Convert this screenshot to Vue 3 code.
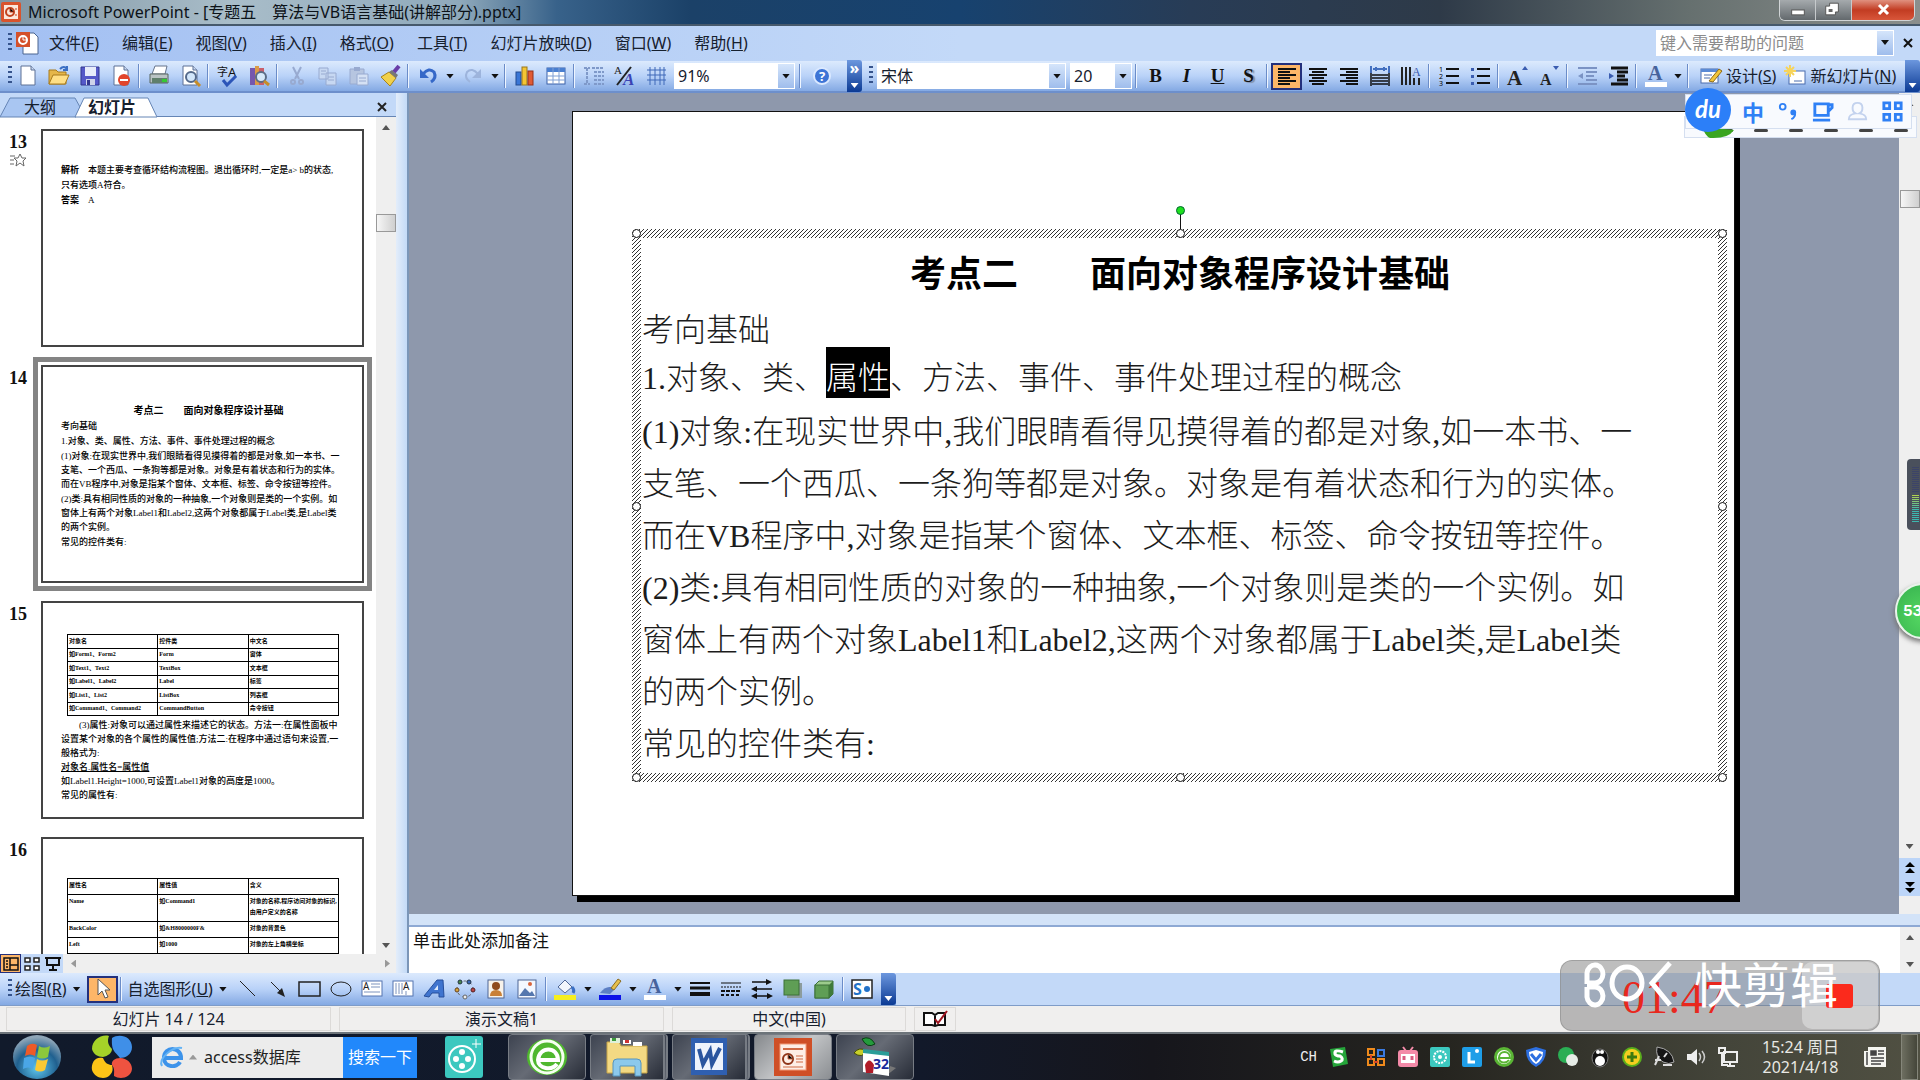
<template>
  <div class="app">
    <header class="titlebar">
      <svg class="app-icon" viewBox="0 0 22 22" v-html="icons.ppt"></svg>
      <h1>Microsoft PowerPoint - [专题五　算法与VB语言基础(讲解部分).pptx]</h1>
      <div class="window-buttons">
        <button aria-label="最小化"><svg viewBox="0 0 36 20"><rect x="12" y="10" width="13" height="5" fill="#fff" stroke="#555" /></svg></button>
        <button aria-label="还原"><svg viewBox="0 0 36 20"><path d="M14 3h9v9h-3v3h-10v-9h4z" fill="#fff" stroke="#555" /><path d="M13 9h4v3h-4z" fill="#666" /></svg></button>
        <button class="close" aria-label="关闭"><svg viewBox="0 0 62 20"><path d="M27 5l9 9M36 5l-9 9" stroke="#fff" stroke-width="3" /></svg></button>
      </div>
    </header>

    <nav class="menubar">
      <i class="grip"></i>
      <svg class="doc-icon" viewBox="0 0 24 24"><path d="M8 2h11l4 4v17H8z" fill="#fff" stroke="#4a6590" /><rect x="1" y="1" width="14" height="15" fill="#d4502a" /><circle cx="8" cy="9" r="4" fill="none" stroke="#fff" stroke-width="2" /><path d="M8 5v4h4" stroke="#fff" fill="none" /></svg>
      <button v-for="m in menus" :key="m.key" class="menu-item">{{ m.label }}(<u>{{ m.key }}</u>)</button>
      <label class="ask">
        <input type="text" placeholder="键入需要帮助的问题" aria-label="键入需要帮助的问题" />
        <span class="drop"><i class="caret"></i></span>
      </label>
      <button class="doc-close" aria-label="关闭窗口"><svg viewBox="0 0 12 12"><path d="M2 2l8 8M10 2l-8 8" stroke="#111" stroke-width="2" /></svg></button>
    </nav>

    <div class="toolbars">
      <i class="grip"></i>
      <template v-for="(t, i) in standardTools" :key="'s' + i">
        <i v-if="t === '|'" class="sep"></i>
        <button v-else-if="t === 'v'" class="arrow" aria-label="更多"><i class="caret"></i></button>
        <button v-else class="tool" :aria-label="t"><svg viewBox="0 0 22 22" v-html="icons[t]"></svg></button>
      </template>
      <label class="combo zoom-box">
        <select aria-label="显示比例"><option>91%</option></select>
        <span class="drop"><i class="caret"></i></span>
      </label>
      <i class="sep"></i>
      <button class="tool help" aria-label="帮助"><svg viewBox="0 0 22 22"><circle cx="11" cy="11" r="8" fill="#3d74d6" stroke="#dbe9ff" stroke-width="2" /><text x="11" y="16" text-anchor="middle" font-size="13" font-weight="bold" fill="#fff">?</text></svg></button>
      <span class="overflow"><b>»</b><i class="caret"></i></span>
      <i class="grip second"></i>
      <label class="combo font-box">
        <select aria-label="字体"><option>宋体</option></select>
        <span class="drop"><i class="caret"></i></span>
      </label>
      <label class="combo size-box">
        <select aria-label="字号"><option>20</option></select>
        <span class="drop"><i class="caret"></i></span>
      </label>
      <i class="sep"></i>
      <button class="tool letter">B</button>
      <button class="tool letter"><em>I</em></button>
      <button class="tool letter"><u>U</u></button>
      <button class="tool letter shadowed">S</button>
      <template v-for="(t, i) in formatTools" :key="'f' + i">
        <i v-if="t === '|'" class="sep"></i>
        <button v-else-if="t === 'v'" class="arrow" aria-label="更多"><i class="caret"></i></button>
        <button v-else class="tool" :class="{ active: t === 'left' }" :aria-label="t"><svg viewBox="0 0 22 22" v-html="icons[t]"></svg></button>
      </template>
      <button class="text-tool"><svg viewBox="0 0 22 22" v-html="icons.design"></svg>设计(<u>S</u>)</button>
      <button class="text-tool"><svg viewBox="0 0 22 22" v-html="icons.newSlide"></svg>新幻灯片(<u>N</u>)</button>
      <span class="overflow last"><i class="caret"></i></span>
    </div>

    <main class="workspace">
      <aside class="outline">
        <div class="tabs">
          <svg class="tab-shape" viewBox="0 0 396 20" preserveAspectRatio="none">
            <path d="M0 20L10 1H75L80 10L76 20z" fill="#a9c6f2" stroke="#6585b5" />
            <path d="M75 20L84 1H148L157 20z" fill="#fff" stroke="#6585b5" />
            <path d="M157 19.500H396" stroke="#6585b5" />
          </svg>
          <button class="tab">大纲</button>
          <button class="tab current">幻灯片</button>
          <button class="tab-close" aria-label="关闭"><svg viewBox="0 0 12 12"><path d="M2 2l8 8M10 2l-8 8" stroke="#222" stroke-width="2" /></svg></button>
        </div>
        <div class="thumb-area">
          <ol class="thumbs">
            <li>
              <div class="no">13<svg viewBox="0 0 18 14"><path d="M1 3h5M1 7h4M1 11h4M11 1l2 4h4l-3 3 1 5-4-3-4 3 1-5-3-3h4z" fill="none" stroke="#666" /></svg></div>
              <div class="thumb t13">
                <p><b>解析</b>　本题主要考查循环结构流程图。退出循环时,一定是a&gt; b的状态,</p>
                <p>只有选项A符合。</p>
                <p><b>答案</b>　A</p>
              </div>
            </li>
            <li>
              <div class="no">14</div>
              <div class="thumb t14 selected">
                <h3>{{ slide.title }}</h3>
                <p v-for="(para, i) in slide.paragraphs" :key="i"><span v-for="line in para" :key="line" class="line">{{ line }}</span></p>
              </div>
            </li>
            <li>
              <div class="no">15</div>
              <div class="thumb t15">
                <table>
                  <tr v-for="row in controlTable" :key="row[0]"><td v-for="c in row" :key="c">{{ c }}</td></tr>
                </table>
                <p class="indent">(3)属性:对象可以通过属性来描述它的状态。方法一:在属性面板中</p>
                <p>设置某个对象的各个属性的属性值;方法二:在程序中通过语句来设置,一</p>
                <p>般格式为:</p>
                <p><u>对象名.属性名=属性值</u></p>
                <p>如Label1.Height=1000,可设置Label1对象的高度是1000。</p>
                <p>常见的属性有:</p>
              </div>
            </li>
            <li>
              <div class="no">16</div>
              <div class="thumb t16">
                <table>
                  <tr v-for="row in propTable" :key="row[0]"><td v-for="c in row" :key="c">{{ c }}</td></tr>
                </table>
              </div>
            </li>
          </ol>
          <div class="vscroll">
            <i class="caret up"></i>
            <i class="knob"></i>
            <i class="caret"></i>
          </div>
        </div>
        <div class="views">
          <button class="on" aria-label="普通视图"><svg viewBox="0 0 18 16"><path d="M2 2h14v12H2zM8 2v12M8 9h8M4 5h2M4 8h2M4 11h2" fill="none" stroke="#111" stroke-width="1.500" /></svg></button>
          <button aria-label="浏览视图"><svg viewBox="0 0 18 16"><path d="M2 2h5v4H2zM11 2h5v4h-5zM2 10h5v4H2zM11 10h5v4h-5z" fill="#fff" stroke="#222" stroke-width="1.500" /></svg></button>
          <button aria-label="放映"><svg viewBox="0 0 18 16"><path d="M1 2h16M3 2v7h12V2M9 9v4M5 14h8" fill="none" stroke="#111" stroke-width="2" /></svg></button>
          <div class="hscroll"><i class="caret to-left"></i><i class="caret to-right"></i></div>
        </div>
      </aside>
      <div class="splitter"></div>

      <section class="editor">
        <div class="stage-row">
          <div class="stage">
            <article class="slide">
              <div class="frame">
                <i v-for="h in handles" :key="h" class="handle" :class="h"></i>
                <i class="stem"></i><i class="rotate"></i>
                <div class="frame-body">
                  <h2>{{ slide.title }}</h2>
                  <p class="topic">考向基础</p>
                  <p class="topic lead">1.对象、类、<mark>属性</mark>、方法、事件、事件处理过程的概念</p>
                  <p v-for="(para, i) in slide.paragraphs.slice(2)" :key="i"><span v-for="line in para" :key="line" class="line">{{ line }}</span></p>
                </div>
              </div>
            </article>
          </div>
          <div class="vscroll main-scroll">
            <i class="caret up"></i>
            <i class="knob"></i>
            <i class="caret"></i>
            <div class="pager">
              <svg viewBox="0 0 10 12"><path d="M5 0l5 5H0zM5 6l5 5H0z" /></svg>
              <svg viewBox="0 0 10 12"><path d="M5 6L0 1h10zM5 12L0 7h10z" /></svg>
            </div>
          </div>
        </div>
        <div class="hsplit"></div>
        <div class="notes-row">
          <textarea aria-label="备注" placeholder="单击此处添加备注"></textarea>
          <div class="vscroll notes-scroll"><i class="caret up"></i><i class="caret"></i></div>
        </div>
      </section>
    </main>

    <div class="drawbar">
      <div class="draw-tools">
        <i class="grip"></i>
        <button class="text-tool">绘图(<u>R</u>)<i class="caret"></i></button>
        <button class="tool active" aria-label="选择"><svg viewBox="0 0 22 22" v-html="icons.cursor"></svg></button>
        <i class="sep"></i>
        <button class="text-tool">自选图形(<u>U</u>)<i class="caret"></i></button>
        <template v-for="(t, i) in drawTools" :key="'d' + i">
          <i v-if="t === '|'" class="sep"></i>
          <button v-else-if="t === 'v'" class="arrow" aria-label="更多"><i class="caret"></i></button>
          <button v-else class="tool" :aria-label="t"><svg viewBox="0 0 22 22" v-html="icons[t]"></svg></button>
        </template>
        <span class="overflow last"><i class="caret"></i></span>
      </div>
    </div>

    <footer class="status">
      <span class="cell wide">幻灯片 14 / 124</span>
      <span class="cell wide">演示文稿1</span>
      <span class="cell lang">中文(中国)</span>
      <span class="cell book"><svg viewBox="0 0 26 18"><path d="M2 3h8l3 2 3-2h7v12h-7l-3 1-3-1H2zM13 5v11" fill="#fff" stroke="#111" stroke-width="2" /><path d="M13 9l3 4 9-12" fill="none" stroke="#a01520" stroke-width="2" /></svg></span>
    </footer>

    <div class="taskbar">
      <button class="orb" aria-label="开始">
        <svg viewBox="0 0 50 46">
          <defs><radialGradient id="orb" cx="50%" cy="75%" r="70%"><stop offset="0" stop-color="#5fc8f0" /><stop offset=".6" stop-color="#20608f" /><stop offset="1" stop-color="#8fa6b8" /></radialGradient></defs>
          <ellipse cx="25" cy="23" rx="24" ry="22" fill="url(#orb)" />
          <path d="M15 12q5-4 10-1l-2 11q-5-3-10 0z" fill="#ee5a28" /><path d="M27 12q5 3 11 0l-2 11q-6 3-11 0z" fill="#8cc83c" />
          <path d="M12 24q6-3 11 0l-2 11q-5-3-10 0z" fill="#4aa6e6" /><path d="M25 25q5 3 11 0l-3 11q-5 3-10 0z" fill="#fbc934" />
        </svg>
      </button>
      <svg class="petals" viewBox="0 0 42 44"><path d="M18 1C10-1 1 5 1 14c1 5 6 8 11 8 5-1 9-4 9-8-4-4-5-8-3-13z" fill="#a5d228" /><path d="M21 3c7-5 20-2 20 9 0 8-7 11-12 11-4-6-9-6-8-20z" fill="#3f8fe8" /><path d="M12 23c-8-2-12 5-11 12 3 9 14 10 18 5 3-3 3-6 2-10-4 0-7-2-9-7z" fill="#fdc417" /><path d="M29 23c7 0 12 5 12 11-1 9-12 11-18 7 0-4 1-7-2-11-1-4 3-7 8-7z" fill="#ee5340" /></svg>
      <form class="search" @submit.prevent>
        <svg viewBox="0 0 24 24"><path d="M4 13h17c0-12-17-12-17 0 0 10 13 10 16 4" fill="none" stroke="#3d93ea" stroke-width="4" /><path d="M2 21C-2 14 12 1 22 3" fill="none" stroke="#63b3f5" stroke-width="2" /></svg>
        <i class="caret up"></i>
        <input type="text" v-model="query" aria-label="搜索" />
        <button>搜索一下</button>
      </form>
      <svg class="film" viewBox="0 0 38 42"><rect width="38" height="42" rx="3" fill="#3cc8bf" /><circle cx="17" cy="23" r="13" fill="none" stroke="#fff" stroke-width="2" /><circle cx="17" cy="16" r="3" fill="#fff" /><circle cx="11" cy="23" r="3" fill="#fff" /><circle cx="23" cy="23" r="3" fill="#fff" /><circle cx="17" cy="30" r="3" fill="#fff" /><path d="M31 3v9M27 8h9" stroke="#fff" /></svg>
      <div class="tasks">
        <button v-for="t in tasks" :key="t.id" class="task" :class="{ on: t.on, stack: t.stack }" :aria-label="t.id"><svg viewBox="0 0 44 40" v-html="t.svg"></svg></button>
      </div>
      <div class="tray">
        <span class="ime">CH</span>
        <svg v-for="(s, i) in tray" :key="i" viewBox="0 0 20 20" v-html="s"></svg>
      </div>
      <time class="clock">15:24 周日<br />2021/4/18</time>
      <svg class="action" viewBox="0 0 24 22"><path d="M5 1h18v20H3q-2 0-2-3V5h4z" fill="#f5f5f0" /><path d="M4 6v13M8 5h5v4H8zM15 5h6M15 8h6M8 12h13M8 15h13M8 18h10" stroke="#444" fill="#444" stroke-width="1.500" /></svg>
      <i class="show-desktop"></i>
    </div>

    <!-- floating tools over the window -->
    <div class="ime-under"><i></i><i></i><i></i><i></i><i></i><i></i></div>
    <svg class="ime-leaf" viewBox="0 0 32 12"><path d="M0 0q3 10 8 12q18 1 24-8L10 2z" fill="#3aa520" /></svg>
    <div class="ime-bar">
      <b>du</b>
      <span>中</span>
      <svg viewBox="0 0 24 24"><circle cx="7" cy="7" r="3" fill="none" stroke="#2f80f5" stroke-width="2" /><circle cx="18" cy="13" r="3" fill="#2f80f5" /><path d="M20 14q0 4-4 6" stroke="#2f80f5" stroke-width="2" fill="none" /></svg>
      <svg viewBox="0 0 24 24"><path d="M4 4h14v12H4zM18 5h4v3l-4 4M2 21h18" fill="none" stroke="#2f80f5" stroke-width="3" /></svg>
      <svg viewBox="0 0 24 24"><path d="M12 3c-7 0-6 9-2 11-6 1-7 3-7 6h18c0-3-1-5-7-6 4-2 5-11-2-11z" fill="none" stroke="#c3d2ee" stroke-width="2" /></svg>
      <svg viewBox="0 0 24 24"><path d="M3 3h6v6H3zM15 3h6v6h-6zM3 15h6v6H3zM15 15h6v6h-6z" fill="none" stroke="#2f80f5" stroke-width="3" /></svg>
    </div>
    <div class="meter"><i></i></div>
    <div class="ball">53</div>
    <div class="recorder">
      <span class="timer">01:47</span>
      <span class="stop"><i></i></span>
      <div class="brand">
        <svg viewBox="0 0 90 48"><path d="M3 23V12a8 9 0 1 1 8 10H3M3 26v10a8 9 0 1 0 8-10H3" fill="none" stroke="#fff" stroke-width="5" /><ellipse cx="43" cy="22" rx="15" ry="16" fill="none" stroke="#fff" stroke-width="5" /><path d="M86 2L68 22l18 22" fill="none" stroke="#fff" stroke-width="5" /></svg>
        <span>快剪辑</span>
      </div>
    </div>
  </div>
</template>

<script setup>
import { ref } from 'vue'

const query = ref('access数据库')

const menus = [
  { label: '文件', key: 'F' },
  { label: '编辑', key: 'E' },
  { label: '视图', key: 'V' },
  { label: '插入', key: 'I' },
  { label: '格式', key: 'O' },
  { label: '工具', key: 'T' },
  { label: '幻灯片放映', key: 'D' },
  { label: '窗口', key: 'W' },
  { label: '帮助', key: 'H' }
]

const standardTools = [
  'new', 'open', 'save', 'perm', '|', 'print', 'preview', '|', 'spell', 'research', '|',
  'cut', 'copy', 'paste', 'brush', '|', 'undo', 'v', 'redo', 'v', '|', 'chart', 'table', '|',
  'expand', 'colorText', 'grid'
]
const formatTools = [
  '|', 'left', 'center', 'right', 'spread', 'vertical', '|', 'numbers', 'bullets', '|',
  'grow', 'shrink', '|', 'outdent', 'indent', '|', 'fontColor', 'v', '|'
]
const drawTools = [
  'line', 'lineArrow', 'rect', 'oval', 'textbox', 'vtextbox', 'wordart', 'diagram', 'clip', 'picture', '|',
  'fill', 'v', 'pen', 'v', 'fontColor', 'v', 'weight', 'dash', 'arrows', 'shadow', 'cube', '|', 'sogou'
]

const handles = ['tl', 'tc', 'tr', 'ml', 'mr', 'bl', 'bc', 'br']

const slide = {
  title: '考点二　　面向对象程序设计基础',
  paragraphs: [
    ['考向基础'],
    ['1.对象、类、属性、方法、事件、事件处理过程的概念'],
    [
      '(1)对象:在现实世界中,我们眼睛看得见摸得着的都是对象,如一本书、一',
      '支笔、一个西瓜、一条狗等都是对象。对象是有着状态和行为的实体。',
      '而在VB程序中,对象是指某个窗体、文本框、标签、命令按钮等控件。'
    ],
    [
      '(2)类:具有相同性质的对象的一种抽象,一个对象则是类的一个实例。如',
      '窗体上有两个对象Label1和Label2,这两个对象都属于Label类,是Label类',
      '的两个实例。'
    ],
    ['常见的控件类有:']
  ]
}

const controlTable = [
  ['对象名', '控件类', '中文名'],
  ['如Form1、Form2', 'Form', '窗体'],
  ['如Text1、Text2', 'TextBox', '文本框'],
  ['如Label1、Label2', 'Label', '标签'],
  ['如List1、List2', 'ListBox', '列表框'],
  ['如Command1、Command2', 'CommandButton', '命令按钮']
]
const propTable = [
  ['属性名', '属性值', '含义'],
  ['Name', '如Command1', '对象的名称,程序访问对象的标识,由用户定义的名称'],
  ['BackColor', '如&H8000000F&', '对象的背景色'],
  ['Left', '如1000', '对象的左上角横坐标'],
  ['Top', '如1000', '对象的左上角纵坐标']
]

const bars = (rows, color = '#111') =>
  rows.map(([x, w], i) => `<rect x="${x}" y="${3 + i * 3}" width="${w}" height="2" fill="${color}"/>`).join('')

const page = '<path d="M4 1h10l4 4v15H4z" fill="#fff" stroke="#5c7196"/><path d="M14 1v4h4" fill="#c9d8f0" stroke="#5c7196"/>'
const sheets = (c) => `<path d="M2 3h9v11H2zM9 8h10v12H9z" fill="#c7d8f2" stroke="${c}"/><path d="M4 6h5M4 9h4M11 12h6M11 15h6" stroke="${c}"/>`

const icons = {
  ppt: '<rect x="1" y="1" width="20" height="20" rx="2" fill="#d9532c"/><rect x="4" y="4" width="14" height="14" fill="#fbe7dc"/><circle cx="10" cy="11" r="4" fill="none" stroke="#c3431e" stroke-width="2"/><path d="M10 7v4h4M15 8h2M15 14h2" stroke="#c3431e"/>',
  new: page,
  open: '<path d="M1 5h7l2 2h8v12H1z" fill="#e5b64a" stroke="#a87b1c"/><path d="M5 10h16l-4 9H1z" fill="#ffdf86" stroke="#a87b1c"/><path d="M12 4q4-4 7 0M19 1v4h-4" fill="none" stroke="#3a6fc4" stroke-width="2"/>',
  save: '<path d="M2 2h18v18H2z" fill="#5559c8" stroke="#33378e"/><rect x="6" y="2" width="11" height="9" fill="#e7ecfa"/><rect x="7" y="14" width="9" height="6" fill="#cfd4ea"/><rect x="8" y="15" width="3" height="5" fill="#33378e"/>',
  perm: page + '<circle cx="14" cy="15" r="6" fill="#e2452b"/><path d="M10 15h8" stroke="#fff" stroke-width="2"/>',
  print: '<path d="M7 1h12l-2 8H4z" fill="#fff" stroke="#66748c"/><path d="M2 9h18v9H2z" fill="#b9c3c4" stroke="#56645f"/><path d="M4 13h15v5H4z" fill="#5f7f6c"/><rect x="14" y="14" width="5" height="3" fill="#35c934"/>',
  preview: page + '<circle cx="12" cy="12" r="5" fill="#d2e6fa" stroke="#54698a" stroke-width="2"/><path d="M16 16l5 5" stroke="#c78d28" stroke-width="3"/>',
  spell: '<text x="0" y="11" font-size="11" fill="#111">字</text><text x="11" y="12" font-size="13" fill="#111">A</text><path d="M6 15l4 5 9-9" fill="none" stroke="#2c55b8" stroke-width="3"/>',
  research: '<rect x="2" y="3" width="5" height="17" fill="#7657ad"/><rect x="7" y="1" width="4" height="19" fill="#db9b48"/><rect x="11" y="3" width="5" height="17" fill="#c95f6b"/><circle cx="13" cy="12" r="5" fill="#d6e8f8" stroke="#5b6c86" stroke-width="2"/><path d="M16 16l5 4" stroke="#c78d28" stroke-width="3"/>',
  cut: '<path d="M7 2l6 12M15 2L9 14" stroke="#98aad0" stroke-width="2"/><circle cx="7" cy="17" r="2" fill="none" stroke="#98aad0" stroke-width="2"/><circle cx="15" cy="17" r="2" fill="none" stroke="#98aad0" stroke-width="2"/>',
  copy: sheets('#98aad0'),
  paste: '<path d="M2 4h14v15H2z" fill="#b6c5e0" stroke="#98aad0"/><path d="M6 2h6v4H6z" fill="#98aad0"/><path d="M9 9h11v11H9z" fill="#d5e1f4" stroke="#98aad0"/><path d="M11 13h7M11 16h7" stroke="#98aad0"/>',
  brush: '<path d="M2 12l8-5 7 6-6 8z" fill="#f1d14b" stroke="#a7831b"/><path d="M10 7l3-2 6 5-2 3z" fill="#777"/><path d="M15 7l5-6" stroke="#6a3da8" stroke-width="4"/>',
  undo: '<path d="M6 9q6-7 11-2 3 6-3 10" fill="none" stroke="#3568c8" stroke-width="3"/><path d="M3 4v9h9z" fill="#3568c8"/>',
  redo: '<path d="M16 9q-6-7-11-2-3 6 3 10" fill="none" stroke="#9db4dc" stroke-width="2"/><path d="M19 4v9h-9z" fill="#9db4dc"/>',
  chart: '<rect x="2" y="7" width="5" height="13" fill="#3a76d6" stroke="#234b90"/><rect x="8" y="2" width="5" height="18" fill="#f4c534" stroke="#98761a"/><rect x="14" y="6" width="5" height="14" fill="#e05a34" stroke="#963018"/>',
  table: '<rect x="2" y="3" width="18" height="16" fill="#fff" stroke="#3b61a8"/><rect x="2" y="3" width="18" height="4" fill="#4a7fd0"/><path d="M2 11h18M2 15h18M8 3v16M14 3v16" stroke="#7f9fd4"/>',
  expand: '<path d="M1 3h6M4 3v16M1 19h6M9 3h12M11 7h10M11 11h10M11 15h10M11 19h10" stroke="#7f99c9" stroke-width="2" stroke-dasharray="3 1" fill="none"/>',
  colorText: '<text x="0" y="9" font-size="11" font-family="Liberation Serif" fill="#222">A</text><path d="M3 20L17 2" stroke="#222" stroke-width="2"/><text x="9" y="20" font-size="17" font-style="italic" font-weight="bold" font-family="Liberation Serif" fill="#3a43b4">A</text>',
  grid: '<path d="M2 5h19M2 10h19M2 15h19M5 2v18M10 2v18M15 2v18M19 2v18" stroke="#3f68b8"/>',
  left: bars([[2, 18], [2, 12], [2, 18], [2, 12], [2, 18], [2, 12]]),
  center: bars([[2, 18], [5, 12], [2, 18], [5, 12], [2, 18], [5, 12]]),
  right: bars([[2, 18], [8, 12], [2, 18], [8, 12], [2, 18], [8, 12]]),
  spread: '<path d="M2 1v7M20 1v7M4 4h14M7 2v4M15 2v4" stroke="#4470c0" stroke-width="2" fill="none"/><path d="M3 10h16M3 13h16M3 16h16M3 19h16M2 8v13M20 8v13" stroke="#111" stroke-width="1.500"/>',
  vertical: '<path d="M2 2v18M6 2v18M10 2v18M14 13v7M19 13v7" stroke="#222" stroke-width="2"/><text x="12" y="11" font-size="12" fill="#3a5cb0" font-family="Liberation Serif">A</text>',
  numbers: '<path d="M8 4h13M8 11h13M8 18h13" stroke="#111" stroke-width="2"/><text x="1" y="7" font-size="7">1</text><text x="1" y="14" font-size="7">2</text><text x="1" y="21" font-size="7">3</text>',
  bullets: '<path d="M8 4h13M8 11h13M8 18h13" stroke="#111" stroke-width="2"/><path d="M2 3h3v3H2zM2 10h3v3H2zM2 17h3v3H2z" fill="#3a5cb0"/>',
  grow: '<text x="0" y="20" font-size="21" font-weight="bold" font-family="Liberation Serif" fill="#222">A</text><path d="M18 1l3 4h-6z" fill="#3a5cb0"/>',
  shrink: '<text x="2" y="20" font-size="16" font-weight="bold" font-family="Liberation Serif" fill="#222">A</text><path d="M18 5l3-4h-6z" fill="#3a5cb0"/>',
  outdent: '<path d="M2 3h19M10 7h11M10 11h8M10 15h11M2 19h19" stroke="#7b93c4" stroke-width="2"/><path d="M7 8v6l-5-3z" fill="#7b93c4"/>',
  indent: '<path d="M4 3h17M10 7h11M10 11h8M10 15h11M4 19h17" stroke="#111" stroke-width="3"/><path d="M2 8v6l5-3z" fill="#3a5cb0"/>',
  fontColor: '<text x="3" y="15" font-size="20" font-weight="bold" font-family="Liberation Serif" fill="#47639c">A</text><rect x="0" y="17" width="22" height="5" fill="#fff"/>',
  design: '<rect x="1" y="4" width="17" height="14" fill="#fff" stroke="#4a6cae"/><rect x="1" y="4" width="17" height="3" fill="#5a8ad6"/><path d="M4 10h8M4 13h6" stroke="#4a6cae"/><path d="M9 16L19 4l3 2-9 11z" fill="#f2c53a" stroke="#8d6a18"/>',
  newSlide: '<rect x="5" y="6" width="16" height="13" fill="#fff" stroke="#4a6cae"/><path d="M10 16h8" stroke="#4a6cae"/><path d="M6 0v12M0 6h12M2 2l8 8M10 2l-8 8" stroke="#f7d45a" stroke-width="2"/>',
  cursor: '<path d="M7 1v16l4-4 3 7 3-1-3-7h5z" fill="#fff" stroke="#555"/>',
  line: '<path d="M3 3l15 15" stroke="#222"/>',
  lineArrow: '<path d="M3 4l10 10" stroke="#222"/><path d="M17 19l-8-4 5-5z" fill="#222"/>',
  rect: '<rect x="0" y="4" width="21" height="14" fill="none" stroke="#222" stroke-width="1.500"/>',
  oval: '<ellipse cx="11" cy="11" rx="10" ry="7" fill="none" stroke="#222"/>',
  textbox: '<rect x="1" y="3" width="20" height="15" fill="#fff" stroke="#5474b0"/><text x="2" y="12" font-size="10" fill="#222">A</text><path d="M10 6h9M10 9h9M3 14h16" stroke="#7d93bd"/>',
  vtextbox: '<rect x="1" y="3" width="20" height="15" fill="#fff" stroke="#5474b0"/><text x="11" y="12" font-size="10" fill="#222">A</text><path d="M4 5v11M7 5v11M10 5v11M14 13v4" stroke="#7d93bd"/>',
  wordart: '<path d="M1 18L14 2h6l1 17h-5v-4H9l-3 4z" fill="#3f74cf" stroke="#274f9c"/><path d="M11 12h4V7z" fill="#dbe8fb"/>',
  diagram: '<circle cx="11" cy="11" r="8" fill="none" stroke="#666" stroke-dasharray="3 3"/><circle cx="6" cy="4" r="2" fill="#4b8a4b" stroke="#234"/><circle cx="15" cy="4" r="2" fill="#3b68b8" stroke="#234"/><circle cx="19" cy="12" r="2" fill="#b44" stroke="#522"/><circle cx="11" cy="19" r="2" fill="#eee" stroke="#666"/><circle cx="3" cy="12" r="2" fill="#d8a53a" stroke="#642"/>',
  clip: '<rect x="3" y="2" width="16" height="18" fill="#f7f2ea" stroke="#4f6796"/><circle cx="11" cy="8" r="4" fill="#8f4a1c"/><path d="M5 18q0-6 6-6t6 6z" fill="#c98036"/>',
  picture: '<rect x="2" y="2" width="18" height="18" fill="#f4f8ff" stroke="#4f6796"/><path d="M3 18l6-8 5 5 2-2 3 5z" fill="#5577ae"/><circle cx="14" cy="6" r="2" fill="#d8653c"/>',
  fill: '<path d="M4 9l7-7 7 7-7 6z" fill="#f2f6fc" stroke="#4f6796"/><path d="M18 9q3 3 1 6" stroke="#3a6fc4" stroke-width="3" fill="none"/><rect x="0" y="17" width="22" height="5" fill="#f6ee20"/>',
  pen: '<path d="M1 15q5-7 11-6l3 3-4 4z" fill="#5c7fc4"/><path d="M12 10l7-9 3 2-7 9z" fill="#e6bf4c" stroke="#8a6c22"/><rect x="0" y="17" width="22" height="5" fill="#0b12e8"/>',
  weight: '<path d="M1 5h20" stroke="#111" stroke-width="2"/><path d="M1 10h20" stroke="#111" stroke-width="3"/><path d="M1 16h20" stroke="#111" stroke-width="4"/>',
  dash: '<path d="M1 5h20" stroke="#111"/><path d="M1 9h20" stroke="#111" stroke-dasharray="2 1"/><path d="M1 13h20" stroke="#111" stroke-width="2" stroke-dasharray="4 1"/><path d="M1 17h20" stroke="#111" stroke-width="2" stroke-dasharray="3 2"/>',
  arrows: '<path d="M1 4h15M6 11h15M5 18h12" stroke="#111" stroke-width="1.500"/><path d="M21 4l-6-3v6zM0 11l6-3v6zM0 18l6-3v6zM22 18l-6-3v6z" fill="#111"/>',
  shadow: '<rect x="5" y="5" width="15" height="15" fill="#8c9c9c"/><rect x="2" y="2" width="15" height="15" fill="#5f9e55" stroke="#3c7138"/>',
  cube: '<path d="M2 7l4-4h14v13l-4 4H2z" fill="#9ccb8c" stroke="#3c7138"/><rect x="2" y="7" width="14" height="13" fill="#5f9e55" stroke="#3c7138"/><path d="M16 7l4-4v13l-4 4z" fill="#3f7a3a"/>',
  sogou: '<rect x="1" y="2" width="20" height="18" fill="#fff" stroke="#222" stroke-width="1.500"/><text x="2" y="17" font-size="16" font-weight="bold" fill="#2272c8">S</text><circle cx="16" cy="11" r="3" fill="#2272c8"/>'
}

const tasks = [
  { id: '浏览器', svg: '<ellipse cx="22" cy="20" rx="20" ry="18" fill="#4fb82e"/><circle cx="22" cy="20" r="16" fill="none" stroke="#f5fff0" stroke-width="3"/><path d="M12 23h21c0-14-19-14-20 0 0 9 14 11 19 4" fill="none" stroke="#fff" stroke-width="4"/>' },
  { id: '文件夹', stack: true, svg: '<path d="M2 5h12l2 4h26v27H2z" fill="#f3d983" stroke="#c8a547"/><path d="M5 1h10v5H5z" fill="#dff0d8"/><path d="M18 3h8v4h-8zM28 5h9v4h-9z" fill="#fff"/><path d="M7 1h4v3H7z" fill="#3a9a3a"/><path d="M20 3h4v3h-4z" fill="#c33"/><path d="M8 39V26q0-4 4-4h20q4 0 4 4v13h-6V29H15v10z" fill="#8cc9ec" stroke="#5594bd"/>' },
  { id: 'Word', stack: true, svg: '<rect x="4" y="1" width="36" height="37" fill="#2f5fb0"/><rect x="8" y="6" width="28" height="27" fill="#eef3fc"/><path d="M12 12l4 15 7-13 2 13 8-16" fill="none" stroke="#2a559f" stroke-width="4"/>' },
  { id: 'PowerPoint', on: true, svg: '<rect x="3" y="1" width="38" height="38" fill="#cf4f26"/><rect x="9" y="7" width="26" height="26" fill="#fdeee6" stroke="#f19b78"/><path d="M12 12h20" stroke="#cf6a45" stroke-width="2"/><circle cx="17" cy="22" r="5" fill="none" stroke="#8e3418" stroke-width="2"/><path d="M17 17v5h5M25 19h7M25 22h7M25 25h7M12 30h20" stroke="#cf6a45"/>' },
  { id: '日历', svg: '<path d="M9 2q8-4 13 5-8 5-13-5z" fill="#249b3c" stroke="#0a3d14"/><path d="M1 16q5-7 13-2-5 8-13 2z" fill="#c8cf2a" stroke="#444a0a"/><path d="M34 38l9-7-6-2z" fill="#777"/><path d="M10 14l26 3v22l-26-4z" fill="#fff"/><path d="M10 12l26 3v4l-26-3z" fill="#2a9d98"/><path d="M12 28q4-9 9 0l-1 8h-7z" fill="#b11c28"/><text x="20" y="32" font-size="14" font-weight="bold" fill="#1a2a9a">32</text>' }
]

const tray = [
  '<path d="M1 2l15-2 3 17-15 3z" fill="#25a53a"/><path d="M14 5q-9-3-8 2 1 2 5 2 4 3 1 5-3 2-7 0" fill="none" stroke="#fff" stroke-width="3"/>',
  '<path d="M2 2h6v6H2zM2 12h6v6H2zM12 12h6v6h-6z" fill="none" stroke="#ef8a1c" stroke-width="2"/><path d="M12 3h6v6h-6z" fill="none" stroke="#3a7ae0" stroke-width="2"/><path d="M5 8v5M8 15h4" stroke="#d8472a" stroke-width="2"/>',
  '<rect x="0" y="3" width="20" height="17" rx="3" fill="#f38aa8"/><path d="M5 0l3 4M15 0l-3 4" stroke="#f38aa8" stroke-width="2"/><rect x="3" y="7" width="14" height="9" fill="#fff"/><path d="M6 9v4M14 9v4" stroke="#d85b80" stroke-width="3"/>',
  '<rect width="20" height="20" rx="2" fill="#3cc8bf"/><circle cx="10" cy="10" r="6" fill="none" stroke="#fff" stroke-dasharray="2 1" stroke-width="2"/><circle cx="10" cy="10" r="2" fill="#fff"/>',
  '<rect width="20" height="20" rx="2" fill="#1e9ee8"/><path d="M7 5v10h6" fill="none" stroke="#fff" stroke-width="3"/><circle cx="15" cy="4" r="2" fill="#fff"/>',
  '<circle cx="10" cy="10" r="10" fill="#5ab534"/><circle cx="10" cy="10" r="7" fill="#fff"/><path d="M4 11h12c0-8-11-8-11 0 0 5 7 6 10 2" fill="none" stroke="#5ab534" stroke-width="2"/>',
  '<path d="M10 0l10 3q0 12-10 17Q0 15 0 3z" fill="#2d6fe0"/><path d="M10 3l7 2q0 8-7 12Q3 13 3 5z" fill="#fff"/><path d="M5 7l5 6 5-6" fill="none" stroke="#2d6fe0" stroke-width="3"/>',
  '<circle cx="8" cy="8" r="8" fill="#2aae54"/><circle cx="14" cy="13" r="6" fill="#e6ece6"/>',
  '<ellipse cx="10" cy="11" rx="8" ry="9" fill="#111" stroke="#777"/><ellipse cx="10" cy="14" rx="5" ry="5" fill="#fff"/><circle cx="8" cy="5" r="2" fill="#fff"/><circle cx="12" cy="5" r="2" fill="#fff"/>',
  '<circle cx="10" cy="10" r="10" fill="#5aae1c"/><circle cx="10" cy="10" r="8" fill="#f5cf1f"/><path d="M10 5v10M5 10h10" stroke="#3c7a10" stroke-width="3"/>',
  '<path d="M3 0q-2 10 6 15 6 3 11 0Q18 2 3 0z" fill="#151515" stroke="#aaa"/><path d="M5 9l-4 9M1 13h6M10 10l3-4M9 18h9" stroke="#ddd" stroke-width="2"/>',
  '<path d="M1 7h4l6-5v16l-6-5H1z" fill="#eee"/><path d="M13 6q3 4 0 8M16 4q5 6 0 12" fill="none" stroke="#ccc" stroke-width="1.500"/>',
  '<path d="M6 5h13v10H6zM9 19h8M12 15v4M1 1h6v5H1zM4 6v12h6" fill="none" stroke="#eee" stroke-width="2"/>'
]
</script>

<style>
body {
  margin: 0;
}
</style>

<style scoped>
.app {
  position: relative;
  display: flex;
  flex-direction: column;
  height: 100vh;
  overflow: hidden;
  background: #c3d9f8;
  color: #16202e;
  font: 16px/20px 'Noto Sans', 'Noto Sans CJK SC', sans-serif;
}

.app *,
.app *::before {
  box-sizing: border-box;
}

button,
input,
select,
textarea {
  margin: 0;
  padding: 0;
  border: 0;
  background: none;
  color: inherit;
  font: inherit;
  white-space: nowrap;
}

h1,
h2,
h3,
p,
ol {
  margin: 0;
  padding: 0;
  font: inherit;
}

svg {
  display: block;
  flex: none;
  overflow: visible;
}

.caret {
  flex: none;
  width: 8px;
  height: 5px;
  background: #111;
  clip-path: polygon(0 0, 100% 0, 50% 100%);
}

.caret.up {
  clip-path: polygon(50% 0, 100% 100%, 0 100%);
}

/* title bar */
.titlebar {
  display: flex;
  align-items: center;
  flex: none;
  height: 26px;
  padding-right: 5px;
  background: linear-gradient(90deg, #7f95a3 0, #a9bdc9 12%, #8fa9bb 24%, #38628a 29%, #1b4168 36%, #17426f 50%, #283c56 62%, #2e3a48 75%, #66706f 88%, #8b8f8d 100%);
  border-bottom: 2px solid #46596c;
}

.app-icon {
  width: 22px;
  height: 22px;
}

h1 {
  flex: 1;
  padding-left: 6px;
  color: #0c1218;
  font-size: 16px;
  line-height: 24px;
  white-space: nowrap;
}

.window-buttons {
  display: flex;
  align-self: flex-start;
  height: 21px;
  border: 1px solid #d0d4d6;
  border-top: 0;
  border-radius: 0 0 6px 6px;
  overflow: hidden;
}

.window-buttons button {
  width: 36px;
  background: linear-gradient(#a5aaad, #63696d);
  border-right: 1px solid #c6cacc;
}

.window-buttons .close {
  width: 62px;
  background: linear-gradient(#e0917f, #c23c22 50%, #d8563a);
  border: 0;
}

.window-buttons svg {
  width: 100%;
  height: 20px;
}

/* menu */
.menubar {
  display: flex;
  align-items: center;
  flex: none;
  gap: 3px;
  height: 35px;
  padding: 0 6px 2px 8px;
  background: linear-gradient(90deg, #a3c0f2, #c3d9f8 50%);
}

.grip {
  flex: none;
  width: 4px;
  height: 20px;
  background: repeating-linear-gradient(#35538c 0 2px, transparent 2px 5px);
}

.doc-icon {
  width: 24px;
  height: 24px;
  margin-right: -3px;
}

.menu-item {
  padding: 0 10px;
}

.ask {
  display: flex;
  height: 26px;
  margin-left: auto;
  background: #fff;
}

.ask input {
  width: 220px;
  padding-left: 4px;
}

.ask input::placeholder {
  color: #8b8b8b;
  opacity: 1;
}

.drop {
  display: flex;
  align-items: center;
  justify-content: center;
  width: 18px;
  border: 1px solid #fff;
  background: linear-gradient(#d5e5fb, #9fbdec);
}

.doc-close {
  margin-left: 5px;
}

.doc-close svg,
.tab-close svg {
  width: 12px;
  height: 12px;
}

/* toolbars */
.toolbars {
  display: flex;
  align-items: center;
  flex: none;
  height: 32px;
  padding-left: 8px;
  background: linear-gradient(#dceafd, #b9d2f8 50%, #84a9e3);
  border-bottom: 2px solid #6d8fcb;
}

.tool {
  display: flex;
  align-items: center;
  justify-content: center;
  flex: none;
  width: 31px;
  height: 27px;
}

.tool svg,
.text-tool svg {
  width: 22px;
  height: 22px;
}

.tool.active {
  border: 2px solid #23307c;
  background: #fdb668;
}

.arrow {
  display: flex;
  align-items: center;
  justify-content: center;
  flex: none;
  width: 14px;
  height: 27px;
}

.sep {
  flex: none;
  width: 2px;
  height: 24px;
  margin: 0 3px 0 2px;
  background: linear-gradient(90deg, #6b8cc8 50%, #eef5ff 50%);
}

.combo {
  display: flex;
  flex: none;
  height: 26px;
  background: #fff;
}

.combo select {
  flex: 1;
  min-width: 0;
  padding-left: 4px;
  appearance: none;
}

.zoom-box {
  width: 121px;
  margin: 0 2px 0 3px;
}

.font-box {
  width: 189px;
}

.size-box {
  width: 62px;
  margin: 0 1px 0 4px;
}

.help {
  margin-left: 2px;
  margin-right: 10px;
}

.overflow {
  display: flex;
  flex-direction: column;
  align-items: center;
  justify-content: space-between;
  flex: none;
  width: 15px;
  height: 32px;
  padding-bottom: 4px;
  background: linear-gradient(#6c97de, #0b3a94);
  border-radius: 0 3px 3px 0;
  color: #fff;
  line-height: 16px;
}

.overflow .caret {
  background: #fff;
}

.overflow.last {
  justify-content: flex-end;
  margin-left: auto;
}

.second {
  margin: 0 4px 0 7px;
}

.letter {
  font: bold 19px/24px 'Liberation Serif', serif;
  color: #111;
}

.shadowed {
  text-shadow: 2px 1px 1px #7d8ca8;
}

.text-tool {
  display: flex;
  align-items: center;
  flex: none;
  height: 27px;
  margin-left: 8px;
}

.text-tool svg {
  margin-right: 4px;
}

.text-tool .caret {
  margin: 0 6px;
}

/* outline pane */
.workspace {
  display: flex;
  flex: 1;
  min-height: 0;
}

.outline {
  display: flex;
  flex-direction: column;
  flex: none;
  width: 396px;
  padding-top: 4px;
  background: #c3d9f8;
}

.tabs {
  position: relative;
  display: flex;
  align-items: center;
  height: 20px;
}

.tab-shape {
  position: absolute;
  inset: 0;
  width: 100%;
  height: 20px;
}

.tab {
  position: relative;
  padding-left: 24px;
}

.tab.current {
  padding-left: 32px;
  font-weight: bold;
}

.tab-close {
  position: relative;
  margin: 0 8px 0 auto;
}

.thumb-area {
  display: flex;
  flex: 1;
  min-height: 0;
  background: #fff;
}

.thumbs {
  display: flex;
  flex-direction: column;
  flex: 1;
  gap: 18px;
  padding-top: 12px;
  overflow: hidden;
  list-style: none;
}

.thumbs li {
  display: flex;
  flex: none;
}

.no {
  width: 41px;
  padding: 2px 0 0 9px;
  font: bold 18px/22px 'Liberation Serif', serif;
  color: #111;
}

.no svg {
  width: 18px;
  height: 14px;
}

.thumb {
  width: 323px;
  height: 218px;
  padding-left: 18px;
  border: 2px solid #444;
  overflow: hidden;
  background: #fff;
  color: #000;
  font: 500 9px/14px 'Liberation Serif', 'Noto Sans CJK SC', serif;
  white-space: nowrap;
}

.selected {
  outline: 5px solid #848484;
  outline-offset: 3px;
}

.t13 {
  padding-top: 32px;
}

.t13 p {
  margin-bottom: 1px;
}

.t14 {
  padding-top: 37px;
}

.t14 h3 {
  margin-right: 6px;
  font-size: 10px;
  font-weight: bold;
  text-align: center;
}

.t14 p {
  padding-top: 1px;
}

.line {
  display: block;
}

.t15 {
  padding-top: 31px;
}

.t15 table {
  height: 82px;
  margin-bottom: 2px;
}

.t15 .indent {
  padding-left: 18px;
}

.t16 {
  padding-top: 39px;
}

.t15 table,
.t16 table {
  width: 272px;
  margin-left: 6px;
  border-collapse: collapse;
  table-layout: fixed;
  font-size: 6px;
  font-weight: bold;
  line-height: 11px;
}

.t16 td {
  padding: 1px 1px 3px;
  vertical-align: top;
  white-space: normal;
}

td {
  padding: 0 1px;
  border: 1px solid #000;
}

.vscroll {
  display: flex;
  flex-direction: column;
  align-items: center;
  justify-content: space-between;
  flex: none;
  width: 20px;
  padding: 8px 0 6px;
  background: #efefef;
}

.vscroll .caret {
  background: #555;
}

.knob {
  width: 20px;
  height: 18px;
  margin: 84px 0 auto;
  border: 1px solid #999;
  background: linear-gradient(90deg, #f6f6f6, #cfcfcf);
}

.views {
  display: flex;
  flex: none;
  height: 19px;
}

.views button {
  display: flex;
  align-items: center;
  justify-content: center;
  width: 21px;
}

.views .on {
  background: #fdb668;
  border: 1px solid #23307c;
}

.views svg {
  width: 18px;
  height: 16px;
}

.hscroll {
  display: flex;
  align-items: center;
  justify-content: space-between;
  flex: 1;
  padding: 0 6px 0 8px;
  background: #efefef;
}

.hscroll .caret {
  width: 5px;
  height: 8px;
  background: #999;
}

.to-left {
  clip-path: polygon(0 50%, 100% 0, 100% 100%);
}

.to-right {
  clip-path: polygon(0 0, 100% 50%, 0 100%);
}

.splitter {
  flex: none;
  width: 13px;
  background: linear-gradient(90deg, #e3edfa, #c3daf7);
  border-right: 2px solid #7b96b8;
}

/* slide editor */
.editor {
  display: flex;
  flex-direction: column;
  flex: 1;
  min-width: 0;
}

.stage-row {
  display: flex;
  flex: 1;
  min-height: 0;
}

.stage {
  flex: 1;
  min-width: 0;
  padding: 18px 164px 18px 163px;
  background: #8e98ac;
}

.slide {
  height: 100%;
  padding: 117px 7px 0 59px;
  border: 1px solid #111;
  background: #fff;
  box-shadow: 5px 6px 0 #000;
}

.frame {
  position: relative;
  padding: 9px;
  background: #fff linear-gradient(135deg, transparent 44%, #333 44% 56%, transparent 56%) 0 0 / 4px 4px;
}

.frame-body {
  height: 535px;
  padding: 11px 0 0 1px;
  background: #fff;
  color: #1c1c1c;
  font: 300 32px/52px 'Liberation Serif', 'Noto Sans CJK SC', serif;
  white-space: nowrap;
}

.frame-body h2 {
  padding-bottom: 5px;
  color: #000;
  font-size: 36px;
  font-weight: bold;
  text-align: center;
}

.topic {
  line-height: 48px;
}

.lead {
  margin-bottom: 4px;
}

mark {
  padding: 13px 0 2px;
  background: #000;
  color: #fff;
}

.handle {
  position: absolute;
  width: 9px;
  height: 9px;
  border: 1px solid #111;
  border-radius: 50%;
  background: #fff;
}

.tl, .tc, .tr { top: 0; }
.bl, .bc, .br { bottom: 0; }
.tl, .ml, .bl { left: 0; }
.tr, .mr, .br { right: 0; }
.tc, .bc { left: calc(50% - 4px); }
.ml, .mr { top: calc(50% - 4px); }

.stem {
  position: absolute;
  top: -16px;
  left: 50%;
  width: 1px;
  height: 16px;
  background: #111;
}

.rotate {
  position: absolute;
  top: -23px;
  left: calc(50% - 4px);
  width: 9px;
  height: 9px;
  border: 1px solid #063;
  border-radius: 50%;
  background: #1fe01f;
}

.main-scroll {
  width: 21px;
  padding: 8px 0 0;
}

.pager {
  display: flex;
  flex-direction: column;
  align-items: center;
  justify-content: space-around;
  width: 100%;
  height: 38px;
  margin: 9px 0 18px;
  background: #bcd5f8;
}

.pager svg {
  width: 10px;
  height: 12px;
}

.hsplit {
  flex: none;
  height: 13px;
  background: #d3e3f8;
  border-bottom: 2px solid #8ea9d4;
}

.notes-row {
  display: flex;
  flex: none;
  height: 46px;
  background: #fff;
}

textarea {
  flex: 1;
  padding: 4px;
  font-size: 17px;
  resize: none;
}

textarea::placeholder {
  color: #111;
  opacity: 1;
}

/* drawing toolbar */
.drawbar {
  flex: none;
  height: 33px;
  background: #c3d9f8;
  border-bottom: 1px solid #7f9cc8;
}

.draw-tools {
  display: inline-flex;
  align-items: center;
  height: 32px;
  padding-left: 8px;
  background: linear-gradient(#dceafd, #b9d2f8 50%, #84a9e3);
}

.draw-tools .text-tool {
  margin-left: 3px;
}

.draw-tools .overflow {
  margin-left: 3px;
}

/* status bar */
.status {
  display: flex;
  flex: none;
  gap: 8px;
  height: 26px;
  padding: 1px 6px;
  background: #f0efee;
}

.cell {
  display: flex;
  align-items: center;
  justify-content: center;
  border: 1px solid #dcdad8;
}

.wide {
  width: 325px;
}

.lang {
  width: 234px;
}

.book {
  width: 42px;
}

.book svg {
  width: 26px;
  height: 18px;
}

/* taskbar */
.taskbar {
  display: flex;
  align-items: center;
  flex: none;
  height: 48px;
  padding: 0 2px 0 12px;
  background: linear-gradient(90deg, #111a2b, #12192a 48%, #16161c 60%, #25241f 75%, #44453a 90%, #505042);
  border-top: 2px solid #6d747a;
}

.orb svg {
  width: 50px;
  height: 46px;
}

.petals {
  width: 42px;
  height: 44px;
  margin: 0 19px 0 29px;
}

.search {
  display: flex;
  align-items: center;
  height: 41px;
  background: #ececec;
}

.search svg {
  width: 24px;
  height: 24px;
  margin: 0 5px 0 8px;
}

.search .caret {
  background: #999;
}

.search input {
  width: 139px;
  margin-left: 7px;
  color: #222;
}

.search button {
  width: 74px;
  height: 41px;
  background: #2188fb;
  color: #fff;
}

.film {
  width: 38px;
  height: 42px;
  margin: 0 25px 0 28px;
}

.tasks {
  display: flex;
  gap: 4px;
}

.task {
  display: flex;
  align-items: center;
  justify-content: center;
  width: 78px;
  height: 46px;
  border: 1px solid #777c84;
  border-radius: 4px;
  background: linear-gradient(135deg, #3d4350, #666b75 45%, #272c37);
}

.task.stack {
  border-right: 5px double #777c84;
}

.task.on {
  background: linear-gradient(135deg, #85888c, #c2c4c6 50%, #8b8e92);
}

.task svg {
  width: 44px;
  height: 40px;
}

.tray {
  display: flex;
  align-items: center;
  gap: 12px;
  margin-left: auto;
}

.tray svg {
  width: 20px;
  height: 20px;
}

.tray svg:first-of-type {
  margin-right: 5px;
}

.ime {
  color: #eee;
  font: 14px/20px 'Liberation Mono', monospace;
}

.clock {
  width: 125px;
  color: #e8e8e4;
  text-align: center;
}

.action {
  width: 24px;
  height: 22px;
  margin-right: 14px;
}

.show-desktop {
  width: 17px;
  height: 46px;
  border: 1px solid #85867a;
  background: linear-gradient(90deg, #6d6e60, #45463a);
}

/* floating tools */
.ime-bar,
.ime-under {
  position: absolute;
  display: flex;
  align-items: center;
  background: #f8fafe;
  border: 1px solid #d5dff0;
}

.ime-bar {
  top: 94px;
  right: 8px;
  gap: 12px;
  height: 35px;
  padding-right: 7px;
  color: #2f80f5;
}

.ime-bar b {
  width: 46px;
  height: 44px;
  margin: -4px -1px 0;
  border-radius: 50%;
  background: #2c7ff8;
  color: #fff;
  font: italic bold 24px/42px Lato, sans-serif;
  text-align: center;
}

.ime-bar span {
  font-size: 22px;
  font-weight: bold;
}

.ime-bar svg {
  width: 23px;
  height: 23px;
}

.ime-under {
  top: 116px;
  right: 3px;
  gap: 21px;
  align-items: flex-end;
  height: 22px;
  padding: 0 8px 5px 34px;
}

.ime-under i {
  width: 14px;
  height: 3px;
  border-radius: 2px;
  background: #444;
}

.ime-leaf {
  position: absolute;
  top: 126px;
  right: 186px;
  width: 32px;
  height: 12px;
}

.meter {
  position: absolute;
  top: 459px;
  right: 0;
  width: 13px;
  height: 71px;
  padding: 8px 1px 8px 5px;
  border-radius: 4px 0 0 4px;
  background: #4a505c;
}

.meter i {
  display: block;
  height: 55px;
  background:
    repeating-linear-gradient(transparent 0 1px, #4a505c 1px 2px),
    linear-gradient(#3c4468 48%, #b9d44a 50%, #3cb8b0 78%);
}

.ball {
  position: absolute;
  top: 583px;
  right: -31px;
  width: 56px;
  height: 56px;
  padding-left: 6px;
  border: 2px solid #e8f4ea;
  border-radius: 50%;
  background: radial-gradient(circle at 50% 60%, #55d862, #35b04e);
  box-shadow: -1px 3px 5px #777;
  color: #fff;
  font: bold 15px/52px Inter, sans-serif;
}

.recorder {
  position: absolute;
  right: 40px;
  bottom: 49px;
  width: 320px;
  height: 71px;
  border: 1px solid rgba(140, 140, 140, 0.6);
  border-radius: 12px;
  background: rgba(125, 125, 125, 0.5);
}

.timer {
  position: absolute;
  top: 14px;
  left: 61px;
  color: #e8281e;
  font: 46px/46px 'Liberation Serif', serif;
}

.stop {
  position: absolute;
  top: 1px;
  right: 1px;
  width: 76px;
  height: 67px;
  padding: 22px 0 0 24px;
  border-radius: 10px;
  background: rgba(225, 225, 225, 0.6);
}

.stop i {
  display: block;
  width: 27px;
  height: 24px;
  border-radius: 3px;
  background: #fb2a1c;
}

.brand {
  position: absolute;
  top: 0;
  left: 23px;
  display: flex;
  align-items: center;
  gap: 20px;
  color: #fff;
  font-size: 48px;
  line-height: 48px;
}

.brand svg {
  width: 90px;
  height: 48px;
}
</style>
